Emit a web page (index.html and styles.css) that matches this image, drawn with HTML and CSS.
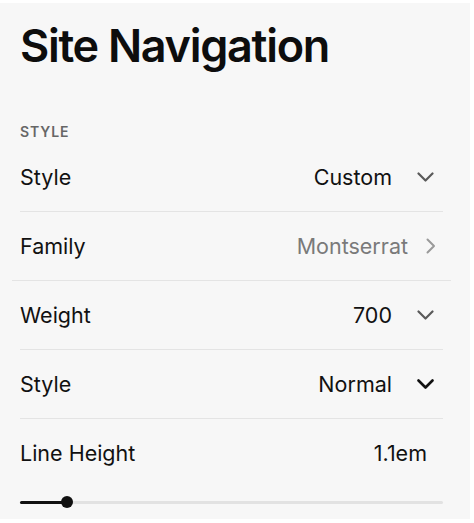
FILE: index.html
```html
<!DOCTYPE html>
<html lang="en">
<head>
<meta charset="utf-8">
<title>Site Navigation</title>
<link rel="stylesheet" href="styles.css">
</head>
<body>
<div class="panel">
  <h1 class="title">Site Navigation</h1>
  <div class="section-label">STYLE</div>
  <div class="row">
    <span class="label">Style</span>
    <span class="control">
      <span class="value">Custom</span>
      <svg class="chev chev--muted" width="17" height="10" viewBox="0 0 17 10"><path d="M1.5 1.5 L8.5 8.5 L15.5 1.5" fill="none" stroke="currentColor" stroke-width="2.2" stroke-linecap="round" stroke-linejoin="round"/></svg>
    </span>
  </div>
  <div class="row row--wide">
    <span class="label">Family</span>
    <span class="control control--link">
      <span class="value value--muted">Montserrat</span>
      <svg class="chev-right" width="10" height="16" viewBox="0 0 10 16"><path d="M1.5 1.5 L8 8 L1.5 14.5" fill="none" stroke="currentColor" stroke-width="2" stroke-linecap="round" stroke-linejoin="round"/></svg>
    </span>
  </div>
  <div class="row">
    <span class="label">Weight</span>
    <span class="control">
      <span class="value">700</span>
      <svg class="chev chev--muted" width="17" height="10" viewBox="0 0 17 10"><path d="M1.5 1.5 L8.5 8.5 L15.5 1.5" fill="none" stroke="currentColor" stroke-width="2.2" stroke-linecap="round" stroke-linejoin="round"/></svg>
    </span>
  </div>
  <div class="row">
    <span class="label">Style</span>
    <span class="control">
      <span class="value">Normal</span>
      <svg class="chev chev--dark" width="17" height="10" viewBox="0 0 17 10"><path d="M1.5 1.5 L8.5 8.5 L15.5 1.5" fill="none" stroke="currentColor" stroke-width="2.6" stroke-linecap="round" stroke-linejoin="round"/></svg>
    </span>
  </div>
  <div class="row row--last">
    <span class="label">Line Height</span>
    <span class="control control--plain">
      <span class="value">1.1em</span>
    </span>
  </div>
  <div class="slider">
    <div class="track">
      <div class="fill" style="width: 47px"></div>
      <div class="thumb" style="left: 47px"></div>
    </div>
  </div>
</div>
</body>
</html>
```
FILE: styles.css
```css
html, body {
  margin: 0;
  padding: 0;
  background: #ffffff;
}

body {
  font-family: Inter, "Noto Sans", "Liberation Sans", sans-serif;
  color: #111111;
}

.panel {
  box-sizing: border-box;
  width: 470px;
  height: 516px;
  margin: 3px 4px 0 0;
  padding: 15px 27px 0 20px;
  background: #f7f7f7;
}

.title {
  margin: 0;
  font-size: 45px;
  line-height: 55px;
  font-weight: 600;
  letter-spacing: -1.3px;
  color: #0d0d0d;
}

.section-label {
  margin-top: 50px;
  margin-bottom: 3px;
  font-size: 14px;
  line-height: 17px;
  font-weight: 600;
  letter-spacing: 0.9px;
  color: #666666;
}

.row {
  display: flex;
  align-items: center;
  justify-content: space-between;
  height: 69px;
  box-sizing: border-box;
  border-bottom: 1px solid #e4e4e4;
  font-size: 21.5px;
}

.row--wide {
  margin: 0 -8px;
  padding: 0 8px;
}

.row--last {
  border-bottom: none;
  height: 68px;
}

.label {
  color: #111111;
}

.control {
  display: flex;
  align-items: center;
  gap: 25px;
  padding-right: 9px;
}

.control--link {
  gap: 18px;
  padding-right: 7px;
}

.control--plain {
  padding-right: 16px;
}

.value {
  color: #111111;
}

.value--muted {
  color: #7a7a7a;
}

.chev {
  display: block;
}

.chev--muted {
  color: #5a5a5a;
}

.chev--dark {
  color: #111111;
}

.chev-right {
  display: block;
  color: #9a9a9a;
}

.slider {
  height: 30px;
  display: flex;
  align-items: center;
}

.track {
  position: relative;
  width: 100%;
  height: 3px;
  border-radius: 2px;
  background: #e2e2e2;
}

.fill {
  position: absolute;
  left: 0;
  top: 0;
  height: 3px;
  border-radius: 2px;
  background: #111111;
}

.thumb {
  position: absolute;
  top: 50%;
  width: 12px;
  height: 12px;
  margin: -6px 0 0 -6px;
  border-radius: 50%;
  background: #111111;
}
```
